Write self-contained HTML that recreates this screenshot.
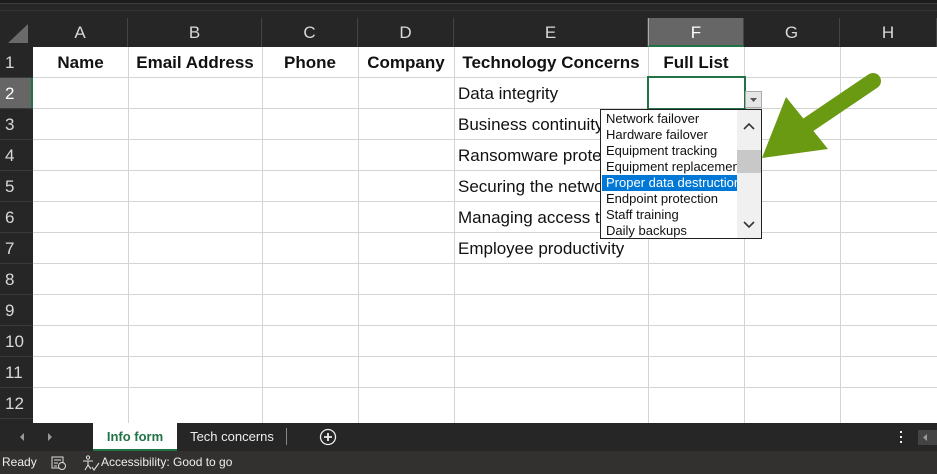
<!DOCTYPE html>
<html><head><style>
*{margin:0;padding:0;box-sizing:border-box}
body{width:937px;height:474px;overflow:hidden;background:#262626;font-family:"Liberation Sans",sans-serif;position:relative}
.a{position:absolute}
.ch{position:absolute;top:18px;height:29px;color:#d8d8d8;font-size:17px;text-align:center;line-height:29px;border-right:1px solid #444}
.rh{position:absolute;left:0;width:33px;height:31px;color:#d8d8d8;font-size:17px;line-height:31px;padding-left:5px;border-bottom:1px solid #3a3a3a}
.grid{position:absolute;left:33px;top:47px;width:904px;height:376px;background:#fff;overflow:hidden}
.vl{position:absolute;top:0;width:1px;height:376px;background:#d4d4d4}
.hl{position:absolute;left:0;height:1px;width:904px;background:#d4d4d4}
.t{position:absolute;font-size:17px;color:#111;white-space:nowrap;line-height:31px}
.b{font-weight:bold;text-align:center}
.dd{position:absolute;left:600px;top:109px;width:162px;height:130px;background:#fff;border:1px solid #222;overflow:hidden}
.it{position:absolute;left:1px;width:135px;height:16px;font-size:13px;line-height:16px;padding-left:4px;color:#111;white-space:nowrap;overflow:hidden}
</style></head><body>
<div class="a" style="left:0;top:0;width:937px;height:4px;background:#1c1c1c;border-bottom:1px solid #3c3c40"></div>
<div class="a" style="left:0;top:10px;width:937px;height:1px;background:#333"></div>
<svg class="a" style="left:6px;top:22px" width="24" height="22"><polygon points="22,2 22,21 2,21" fill="#6a6a6a"/></svg>
<div class="ch" style="left:33px;width:95px">A</div>
<div class="ch" style="left:128px;width:134px">B</div>
<div class="ch" style="left:262px;width:96px">C</div>
<div class="ch" style="left:358px;width:96px">D</div>
<div class="ch" style="left:454px;width:194px">E</div>
<div class="ch" style="left:648px;width:96px;background:#666;color:#fff;border-bottom:2px solid #217346;border-left:1px solid #aaa">F</div>
<div class="ch" style="left:744px;width:96px">G</div>
<div class="ch" style="left:840px;width:97px">H</div>
<div class="rh" style="top:47px">1</div>
<div class="rh" style="top:78px;background:#666;color:#fff;border-right:2px solid #217346">2</div>
<div class="rh" style="top:109px">3</div>
<div class="rh" style="top:140px">4</div>
<div class="rh" style="top:171px">5</div>
<div class="rh" style="top:202px">6</div>
<div class="rh" style="top:233px">7</div>
<div class="rh" style="top:264px">8</div>
<div class="rh" style="top:295px">9</div>
<div class="rh" style="top:326px">10</div>
<div class="rh" style="top:357px">11</div>
<div class="rh" style="top:388px">12</div>
<div class="grid">
<div class="vl" style="left:95px"></div><div class="vl" style="left:229px"></div><div class="vl" style="left:325px"></div><div class="vl" style="left:421px"></div><div class="vl" style="left:615px"></div><div class="vl" style="left:711px"></div><div class="vl" style="left:807px"></div>
<div class="hl" style="top:30px"></div><div class="hl" style="top:61px"></div><div class="hl" style="top:92px"></div><div class="hl" style="top:123px"></div><div class="hl" style="top:154px"></div><div class="hl" style="top:185px"></div><div class="hl" style="top:216px"></div><div class="hl" style="top:247px"></div><div class="hl" style="top:278px"></div><div class="hl" style="top:309px"></div><div class="hl" style="top:340px"></div>
<div class="t b" style="left:0;width:95px;top:0">Name</div>
<div class="t b" style="left:95px;width:134px;top:0">Email Address</div>
<div class="t b" style="left:229px;width:96px;top:0">Phone</div>
<div class="t b" style="left:325px;width:96px;top:0">Company</div>
<div class="t b" style="left:421px;width:194px;top:0">Technology Concerns</div>
<div class="t b" style="left:615px;width:96px;top:0">Full List</div>
<div class="t" style="left:425px;top:31px">Data integrity</div>
<div class="t" style="left:425px;top:62px">Business continuity</div>
<div class="t" style="left:425px;top:93px">Ransomware protection</div>
<div class="t" style="left:425px;top:124px">Securing the network</div>
<div class="t" style="left:425px;top:155px">Managing access to data</div>
<div class="t" style="left:425px;top:186px">Employee productivity</div>
<div class="a" style="left:614px;top:29px;width:99px;height:34px;border:2px solid #217346"></div>
</div>
<div class="a" style="left:745px;top:91px;width:17px;height:17px;background:#e6e6e6;border:1px solid #aaa"><svg width="15" height="15"><polygon points="4,6 11,6 7.5,10" fill="#555"/></svg></div>
<div class="dd">
<div class="it" style="top:1px">Network failover</div>
<div class="it" style="top:17px">Hardware failover</div>
<div class="it" style="top:33px">Equipment tracking</div>
<div class="it" style="top:49px">Equipment replacement</div>
<div class="it" style="top:65px;background:#0078d7;color:#fff">Proper data destruction</div>
<div class="it" style="top:81px">Endpoint protection</div>
<div class="it" style="top:97px">Staff training</div>
<div class="it" style="top:113px">Daily backups</div>
<div class="a" style="left:136px;top:0;width:24px;height:128px;background:#f0f0f0"></div>
<div class="a" style="left:136px;top:40px;width:24px;height:23px;background:#c8c8c8"></div>
<svg class="a" style="left:136px;top:0" width="24" height="128"><polyline points="7,19 12,14 17,19" fill="none" stroke="#333" stroke-width="1.6"/><polyline points="7,112 12,117 17,112" fill="none" stroke="#333" stroke-width="1.6"/></svg>
</div>
<svg class="a" style="left:740px;top:65px" width="160" height="110"><line x1="133" y1="16" x2="65" y2="62" stroke="#6a9a12" stroke-width="16" stroke-linecap="round"/><polygon points="22,93 46,32 88,84" fill="#6a9a12"/></svg>
<div class="a" style="left:0;top:423px;width:937px;height:28px;background:#262626"></div>
<svg class="a" style="left:17px;top:431px" width="40" height="12"><polygon points="3,6 7,2 7,10" fill="#999"/><polygon points="35,6 31,2 31,10" fill="#999"/></svg>
<div class="a" style="left:93px;top:423px;width:84px;height:28px;background:#fff;border-bottom:2px solid #217346;color:#217346;font-weight:bold;font-size:13px;text-align:center;line-height:27px">Info form</div>
<div class="a" style="left:177px;top:423px;width:110px;height:28px;color:#eee;font-size:13px;text-align:center;line-height:27px">Tech concerns</div>
<div class="a" style="left:286px;top:428px;width:1px;height:17px;background:#888"></div>
<svg class="a" style="left:319px;top:428px" width="18" height="18"><circle cx="9" cy="9" r="7.5" fill="none" stroke="#eee" stroke-width="1.3"/><path d="M9 5v8M5 9h8" stroke="#eee" stroke-width="1.8"/></svg>
<svg class="a" style="left:899px;top:431px" width="6" height="14"><rect x="1" y="0" width="2" height="2" fill="#eee"/><rect x="1" y="5" width="2" height="2" fill="#eee"/><rect x="1" y="10" width="2" height="2" fill="#eee"/></svg>
<div class="a" style="left:918px;top:430px;width:19px;height:15px;background:#444"><svg width="16" height="15"><polygon points="5,7.5 9,4 9,11" fill="#999"/></svg></div>
<div class="a" style="left:0;top:451px;width:937px;height:23px;background:#323130;color:#eee;font-size:12px;line-height:23px">
<span class="a" style="left:2px">Ready</span>
<svg class="a" style="left:51px;top:5px" width="16" height="14"><rect x="1" y="1" width="11" height="11" fill="none" stroke="#ddd"/><path d="M3 4h7M3 7h4M3 10h3" stroke="#ddd"/><circle cx="11" cy="10" r="3.5" fill="#323130" stroke="#ddd"/></svg>
<svg class="a" style="left:82px;top:4px" width="18" height="16"><circle cx="6" cy="2.5" r="1.6" fill="none" stroke="#ddd"/><path d="M1 6h10M6 6v4l-3 5M6 10l3 4M10 12l2 3 5-7" fill="none" stroke="#ddd" stroke-width="1.1"/></svg>
<span class="a" style="left:101px">Accessibility: Good to go</span>
</div>
</body></html>
